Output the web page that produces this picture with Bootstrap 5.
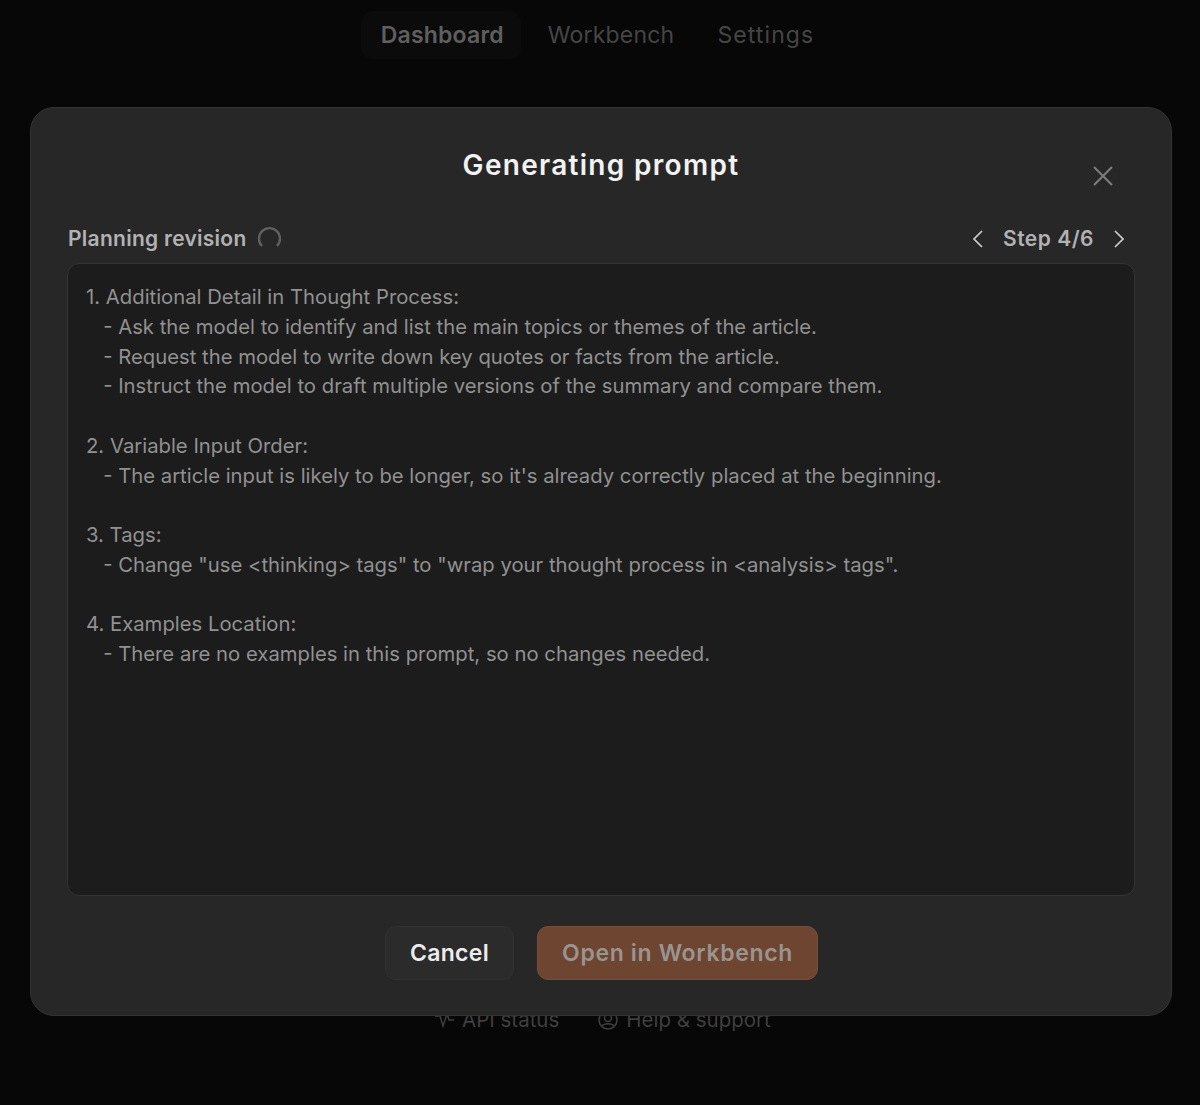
<!DOCTYPE html>
<html lang="en">
<head>
<meta charset="utf-8">
<title>Generating prompt</title>
<link href="https://cdn.jsdelivr.net/npm/bootstrap@5.3.0/dist/css/bootstrap.min.css" rel="stylesheet">
<style>
html,body{height:100%;}
body{background:#070707;font-family:Inter,"Liberation Sans",sans-serif;overflow:hidden;height:1105px;position:relative;}
.top-nav{height:72px;padding-top:11px;}
.top-link{font-size:23px;line-height:48px;padding:0 21px 0 22px;color:#454545;border-radius:12px;letter-spacing:.2px;}
.top-link.on{color:#5f5f5f;font-weight:600;background:#0b0b0b;padding:0 17px 0 20px;margin-right:5px;letter-spacing:.2px;}
.top-link.last{letter-spacing:1.1px;padding-right:25px;}
.bottom-nav{position:absolute;top:1001px;left:434px;gap:39px;color:#3f3f3f;font-size:20.5px;line-height:37px;}
.api-item svg{margin-right:-2px;}
.dialog-box{position:absolute;left:30px;top:107px;width:1142px;height:909px;background:#272727;border:1px solid #333;border-radius:24px;padding:0 36px;}
.dialog-title{font-size:28px;font-weight:600;color:#f2f2f2;text-align:center;letter-spacing:1.3px;line-height:36px;margin:39px 0 0;}
.close-x{position:absolute;top:54px;right:56px;width:24px;height:24px;background:none;border:0;padding:0;color:#7d7d7d;}
.step-head{margin-top:38px;height:35px;color:#b2b2b2;font-size:21px;font-weight:600;letter-spacing:.27px;padding-top:1px;}
.step-label{padding-left:1px;}
.spin-ring{width:24px;height:24px;margin-left:10px;margin-top:-3px;color:#606060;}
.step-num{margin:0 15px;width:91px;white-space:nowrap;text-align:center;letter-spacing:.5px;}
.chev{width:20px;height:24px;color:#cfcfcf;}
.chev-end{margin-right:6px;}
.out-box{margin-top:7px;height:633px;background:#1c1c1c;border:1px solid #343434;border-radius:12px;padding:18px;color:#919191;font-size:20.3px;line-height:29.75px;white-space:pre-wrap;margin-bottom:0;font-family:inherit;overflow:hidden;}
.foot-btns{margin-top:30px;gap:23px;padding-left:1px;}
.act{height:54px;border-radius:11px;font-size:23px;font-weight:600;letter-spacing:.3px;padding:0;display:flex;align-items:center;justify-content:center;}
.act-cancel{width:129px;background:#2b2b2b;border:1px solid #313131;color:#ececec;}
.act-open{width:281px;background:#6e4530;border:1px solid #74503c;color:#9a9490;letter-spacing:.65px;}
</style>
</head>
<body>
<nav class="top-nav d-flex justify-content-center align-items-start">
  <a class="top-link on text-decoration-none">Dashboard</a>
  <a class="top-link text-decoration-none">Workbench</a>
  <a class="top-link last text-decoration-none">Settings</a>
</nav>
<div class="bottom-nav d-flex">
  <span class="api-item d-flex align-items-center gap-2"><svg width="22" height="20" viewBox="0 0 22 20" fill="none" stroke="currentColor" stroke-width="1.5"><path d="M1 6h5l3 10 4-12 2 6h5"/></svg>API status</span>
  <span class="d-flex align-items-center gap-2"><svg width="20" height="20" viewBox="0 0 20 20" fill="none" stroke="currentColor" stroke-width="1.5"><circle cx="10" cy="10" r="9"/><circle cx="10" cy="8" r="3.5"/><path d="M4 16c2-3 10-3 12 0"/></svg>Help &amp; support</span>
</div>
<div class="dialog-box" role="dialog">
  <h1 class="dialog-title">Generating prompt</h1>
  <button class="close-x" aria-label="Close"><svg width="24" height="24" viewBox="0 0 24 24" fill="none" stroke="currentColor" stroke-width="2"><path d="M3 3l18 18M21 3L3 21"/></svg></button>
  <div class="step-head d-flex justify-content-between align-items-center">
    <div class="step-label d-flex align-items-center">Planning revision<svg class="spin-ring" viewBox="0 0 24 24" fill="none" stroke="currentColor" stroke-width="2.4"><path d="M5 20A10.5 10.5 0 1 1 20 20"/></svg></div>
    <div class="d-flex align-items-center">
      <svg class="chev" viewBox="0 0 20 24" fill="none" stroke="currentColor" stroke-width="1.7"><path d="M14 4l-8 8 8 8"/></svg>
      <span class="step-num">Step 4/6</span>
      <svg class="chev chev-end" viewBox="0 0 20 24" fill="none" stroke="currentColor" stroke-width="1.7"><path d="M6 4l8 8-8 8"/></svg>
    </div>
  </div>
  <pre class="out-box">1. Additional Detail in Thought Process:
   - Ask the model to identify and list the main topics or themes of the article.
   - Request the model to write down key quotes or facts from the article.
   - Instruct the model to draft multiple versions of the summary and compare them.

2. Variable Input Order:
   - The article input is likely to be longer, so it's already correctly placed at the beginning.

3. Tags:
   - Change "use &lt;thinking&gt; tags" to "wrap your thought process in &lt;analysis&gt; tags".

4. Examples Location:
   - There are no examples in this prompt, so no changes needed.</pre>
  <div class="foot-btns d-flex justify-content-center">
    <button class="btn act act-cancel">Cancel</button>
    <button class="btn act act-open">Open in Workbench</button>
  </div>
</div>
<script src="https://cdn.jsdelivr.net/npm/bootstrap@5.3.0/dist/js/bootstrap.bundle.min.js"></script>
</body>
</html>
